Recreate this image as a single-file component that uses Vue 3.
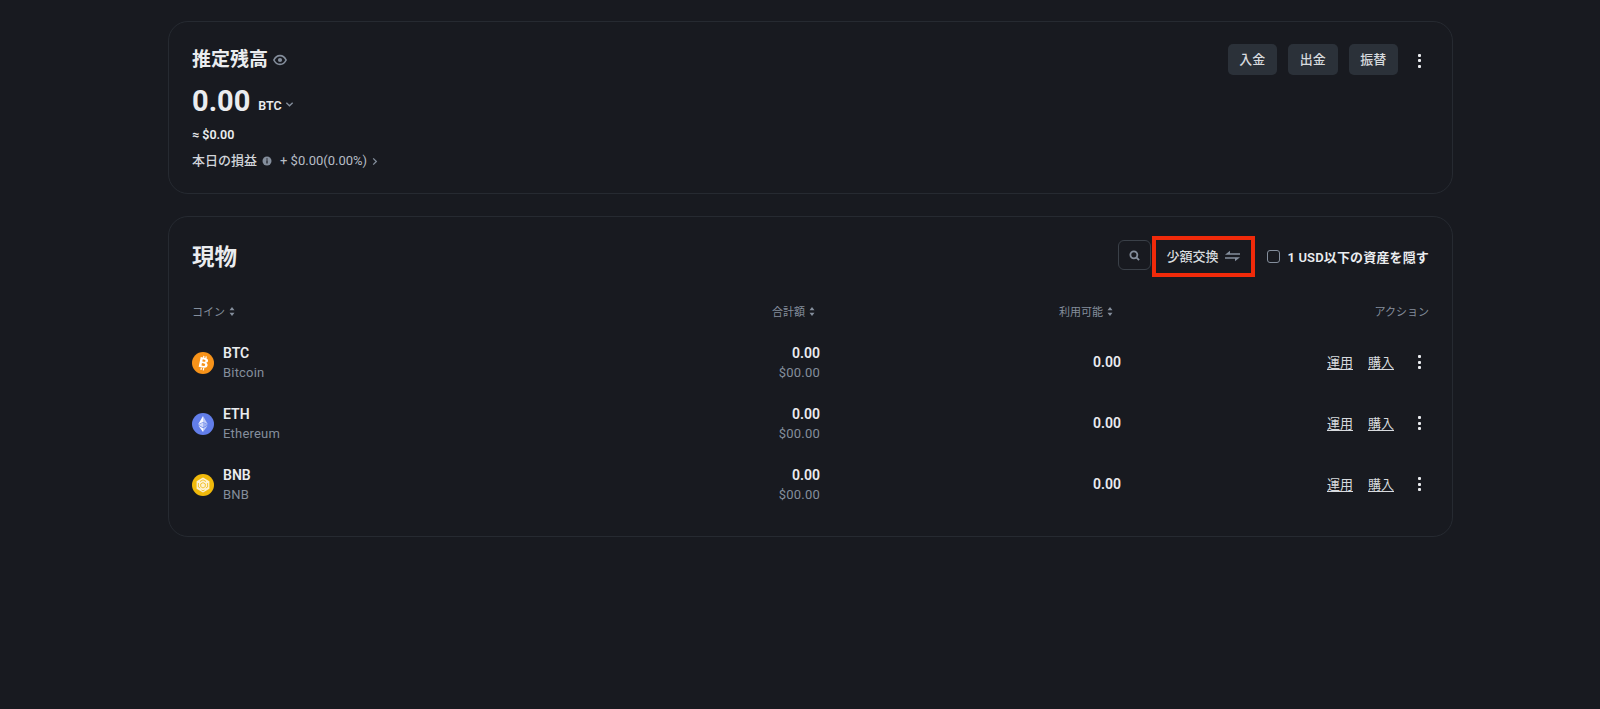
<script setup>
const coins = [
  { sym: 'BTC', name: 'Bitcoin', color: '#f7931a' },
  { sym: 'ETH', name: 'Ethereum', color: '#627eea' },
  { sym: 'BNB', name: 'BNB', color: '#f0b90b' },
]
const heads = [
  { label: 'コイン', cls: 'h-coin' },
  { label: '合計額', cls: 'h-total' },
  { label: '利用可能', cls: 'h-free' },
]
</script>

<template>
  <main class="page">
    <section class="card balance">
      <div class="bal-left">
        <div class="bal-title">
          <h2>推定残高</h2>
          <svg class="eye" width="14" height="14" viewBox="0 0 24 24" fill="none">
            <path d="M1.5 12C4 6.8 7.6 4.5 12 4.5s8 2.3 10.5 7.5c-2.5 5.2-6.1 7.5-10.5 7.5S4 17.2 1.5 12z" stroke="#848e9c" stroke-width="2.8" />
            <circle cx="12" cy="12" r="3.6" fill="#848e9c" />
          </svg>
        </div>
        <div class="bal-amount">
          <span class="big">0.00</span>
          <span class="unit">BTC</span>
          <svg width="9" height="9" viewBox="0 0 10 10" fill="none">
            <path d="M1.5 3l3.5 3.5L8.5 3" stroke="#848e9c" stroke-width="1.5" />
          </svg>
        </div>
        <div class="bal-usd">≈ $0.00</div>
        <div class="bal-pnl">
          <span>本日の損益</span>
          <svg class="info" width="10" height="10" viewBox="0 0 10 10">
            <circle cx="5" cy="5" r="4.5" fill="#848e9c" />
            <rect x="4.4" y="4.3" width="1.2" height="3.2" fill="#181a20" />
            <rect x="4.4" y="2.4" width="1.2" height="1.2" fill="#181a20" />
          </svg>
          <span class="pnl-val">+ $0.00(0.00%)</span>
          <svg width="8" height="9" viewBox="0 0 8 10" fill="none">
            <path d="M2 1.5L5.5 5 2 8.5" stroke="#848e9c" stroke-width="1.4" />
          </svg>
        </div>
      </div>
      <div class="bal-actions">
        <button class="btn"><span>入金</span></button>
        <button class="btn"><span>出金</span></button>
        <button class="btn"><span>振替</span></button>
        <span class="dots"><i /><i /><i /></span>
      </div>
    </section>

    <section class="card spot">
      <header class="spot-head">
        <h2>現物</h2>
        <div class="tools">
          <button class="search" aria-label="検索">
            <svg width="11" height="11" viewBox="0 0 12 12" fill="none">
              <circle cx="5.3" cy="5.3" r="3.8" stroke="#848e9c" stroke-width="2" />
              <path d="M8 8l3 3" stroke="#848e9c" stroke-width="2" />
            </svg>
          </button>
          <div class="convert">
            <span class="convert-text">少額交換</span>
            <svg width="15" height="12" viewBox="0 0 15 12">
              <path d="M0 4.8L5 .8v2.4h10v1.6z" fill="#848e9c" />
              <path d="M15 7.2l-5 4V8.800H0V7.200z" fill="#848e9c" />
            </svg>
          </div>
          <label class="hide">
            <span class="box" />
            <span class="hide-text">1 USD以下の資産を隠す</span>
          </label>
        </div>
      </header>

      <div class="grid thead">
        <div v-for="h in heads" :key="h.cls" class="th" :class="h.cls">
          {{ h.label }}
          <svg width="6" height="9" viewBox="0 0 6 9">
            <path d="M3 0l2.5 3.2h-5zM3 9L.5 5.800h5z" fill="#848e9c" />
          </svg>
        </div>
        <div class="th h-act">アクション</div>
      </div>

      <div v-for="c in coins" :key="c.sym" class="grid row">
        <div class="coin">
          <svg class="logo" width="22" height="22" viewBox="0 0 22 22">
            <circle cx="11" cy="11" r="11" :fill="c.color" />
            <g v-if="c.sym === 'BTC'" transform="rotate(12 11 11)">
              <path d="M7.5 5.5h5c1.800 0 3 1 3 2.500 0 1-.6 1.800-1.500 2.100 1.200.3 2 1.200 2 2.500 0 1.800-1.300 2.900-3.400 2.900H7.500zM10 7.400v2.200h1.800c.7 0 1.200-.4 1.200-1.100s-.5-1.100-1.200-1.100zm0 3.900v2.400h2.200c.8 0 1.300-.5 1.300-1.200s-.5-1.200-1.300-1.200z" fill="#fff" fill-rule="evenodd" />
              <path d="M9.800 3.800h1.200v2H9.800zM12.200 3.800h1.200v2h-1.200zM9.800 15.800h1.200v2.400H9.800zM12.200 15.800h1.200v2.400h-1.200z" fill="#fff" />
            </g>
            <template v-else-if="c.sym === 'ETH'">
              <path d="M11 3l-4.800 8.200L11 8.900z" fill="#fff" fill-opacity=".95" />
              <path d="M11 3l4.800 8.200L11 8.900z" fill="#fff" fill-opacity=".6" />
              <path d="M11 9.500l-4.800 2.200L11 14.500z" fill="#fff" fill-opacity=".7" />
              <path d="M11 9.500l4.800 2.200L11 14.500z" fill="#fff" fill-opacity=".4" />
              <path d="M6.300 12.600L11 19v-3.700z" fill="#fff" fill-opacity=".95" />
              <path d="M15.700 12.600L11 19v-3.700z" fill="#fff" fill-opacity=".6" />
            </template>
            <template v-else>
              <path d="M11 3.600l6.400 3.700v7.400L11 18.400l-6.400-3.700V7.300z" fill="#fff" fill-opacity=".82" />
              <path d="M8 7.500L11 5.800l3 1.700M6.400 9v4l1.800 1M15.600 9v4l-1.800 1M11 8.600l2.300 1.300v2.700L11 14l-2.300-1.400V9.900zM9.500 16l1.500.9 1.500-.9" fill="none" stroke="#f0b90b" stroke-width=".8" />
            </template>
          </svg>
          <div>
            <div class="sym">{{ c.sym }}</div>
            <div class="sub">{{ c.name }}</div>
          </div>
        </div>
        <div class="total">
          <div class="num">0.00</div>
          <div class="sub">$00.00</div>
        </div>
        <div class="free num">0.00</div>
        <div class="acts">
          <a>運用</a>
          <a>購入</a>
          <span class="dots"><i /><i /><i /></span>
        </div>
      </div>
    </section>
  </main>
</template>

<style>
html, body { background: #181a20; }
</style>

<style scoped>
.page {
  box-sizing: border-box;
  width: 1285px;
  min-height: 709px;
  margin-left: 168px;
  padding-top: 21px;
  display: flex;
  flex-direction: column;
  gap: 22px;
  font-family: Roboto, "Noto Sans CJK JP", sans-serif;
  color: #eaecef;
}
.card {
  box-sizing: border-box;
  border: 1px solid #262a31;
  border-radius: 20px;
  padding: 0 23px;
}
h2 { margin: 0; font-weight: 700; }

/* 推定残高 */
.balance {
  height: 173px;
  display: flex;
  justify-content: space-between;
}
.bal-title {
  display: flex;
  align-items: center;
  gap: 5px;
  margin-top: 24px;
  height: 28px;
}
.bal-title h2 { font-size: 19px; line-height: 28px; }
.bal-amount {
  display: flex;
  align-items: center;
  margin-top: 8px;
  height: 38px;
}
.big { font-size: 29px; font-weight: 700; }
.unit { font-size: 12.5px; font-weight: 600; margin: 9px 3px 0 8px; }
.bal-amount svg { margin-top: 7px; }
.bal-usd {
  font-size: 12.5px;
  font-weight: 600;
  margin-top: 7px;
  line-height: 16px;
}
.bal-pnl {
  display: flex;
  align-items: center;
  font-size: 13px;
  font-weight: 500;
  color: #d2d5da;
  margin-top: 8px;
  line-height: 20px;
}
.info { margin-left: 5px; }
.pnl-val { margin: 0 4px 0 8px; font-size: 13px; font-weight: 400; color: #b7bdc6; }

.bal-actions {
  display: flex;
  align-items: center;
  align-self: flex-start;
  margin-top: 22px;
  gap: 11px;
}
.btn {
  width: 49.5px;
  height: 31px;
  border: 0;
  border-radius: 5px;
  background: #2b3139;
  color: #d7dade;
  font: 500 13px Roboto, "Noto Sans CJK JP", sans-serif;
  padding: 0 0 2px;
}
.bal-actions .dots { margin: 2px 2px 0 2px; }
.dots {
  display: inline-flex;
  flex-direction: column;
  gap: 2.5px;
  width: 16px;
  align-items: center;
}
.dots i {
  display: block;
  width: 3px;
  height: 3px;
  background: #eaecef;
  border-radius: 1px;
}

/* 現物 */
.spot { height: 321px; }
.spot-head {
  display: flex;
  justify-content: space-between;
  align-items: center;
  height: 79px;
}
.spot-head h2 { font-size: 22.5px; line-height: 26px; }
.tools {
  display: flex;
  align-items: center;
}
.search {
  box-sizing: border-box;
  width: 33px;
  height: 30px;
  margin-top: -3px;
  border: 1px solid #3a4048;
  border-radius: 6px;
  background: transparent;
  display: flex;
  align-items: center;
  justify-content: center;
  padding: 0;
}
.convert {
  box-sizing: border-box;
  width: 103px;
  height: 41px;
  margin-left: 1px;
  border: 4px solid #f02a0a;
  display: flex;
  align-items: center;
  gap: 7px;
  padding: 0 0 2px 10px;
  font-size: 13px;
  font-weight: 500;
  color: #d7dade;
}
.hide {
  display: flex;
  align-items: center;
  gap: 7px;
  margin: -1px 0 0 12px;
  font-size: 13px;
  font-weight: 600;
}
.hide-text { letter-spacing: 0.15px; }
.box {
  box-sizing: border-box;
  width: 13px;
  height: 13px;
  border: 1px solid #848e9c;
  border-radius: 3px;
}

.grid {
  display: grid;
  grid-template-columns: 400px 228px 301px 308px;
}
.thead {
  height: 30px;
  align-items: center;
  margin-bottom: 6px;
}
.th {
  display: flex;
  align-items: center;
  gap: 4px;
  font-size: 11px;
  color: #848e9c;
}
.h-total { justify-content: flex-end; padding-right: 5px; }
.h-free { justify-content: flex-end; padding-right: 8px; }
.h-act { justify-content: flex-end; }

.row {
  height: 61px;
  align-items: center;
}
.coin {
  display: flex;
  align-items: center;
  gap: 9px;
}
.sym {
  font-size: 14px;
  font-weight: 600;
  line-height: 20px;
}
.sub {
  font-size: 13px;
  letter-spacing: 0.2px;
  color: #848e9c;
  line-height: 20px;
}
.num {
  font-size: 14px;
  font-weight: 600;
  line-height: 20px;
}
.total { text-align: right; }
.free { text-align: right; margin-top: -1px; }
.acts {
  display: flex;
  align-items: center;
  justify-content: flex-end;
  margin-top: -2px;
  font-size: 13px;
  color: #d7dade;
}
.acts a {
  text-decoration: underline;
  text-underline-offset: 2px;
  margin-right: 15px;
}
.acts a:nth-child(2) { margin-right: 17px; }
.acts .dots { margin: 1px 2px 0 0; }
</style>
